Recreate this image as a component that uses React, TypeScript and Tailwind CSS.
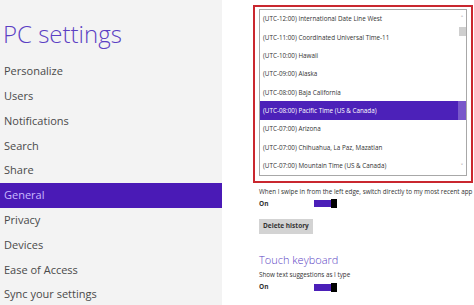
import React from 'react';

const navItems = [
    'Personalize',
    'Users',
    'Notifications',
    'Search',
    'Share',
    'General',
    'Privacy',
    'Devices',
    'Ease of Access',
    'Sync your settings',
];

const zones = [
    '(UTC-12:00) International Date Line West',
    '(UTC-11:00) Coordinated Universal Time-11',
    '(UTC-10:00) Hawaii',
    '(UTC-09:00) Alaska',
    '(UTC-08:00) Baja California',
    '(UTC-08:00) Pacific Time (US & Canada)',
    '(UTC-07:00) Arizona',
    '(UTC-07:00) Chihuahua, La Paz, Mazatlan',
    '(UTC-07:00) Mountain Time (US & Canada)',
];

function Toggle() {
    return (
        <div className="flex items-center">
            <div className="w-[17px] h-[7px] bg-[#4b1fb8]" />
            <div className="w-[6px] h-[9px] bg-black" />
        </div>
    );
}

export default function App() {
    return (
        <div
            className="flex w-[474px] h-[305px] overflow-hidden bg-white"
            style={{ fontFamily: '"Open Sans", "Noto Sans", sans-serif' }}
        >
            {/* left nav */}
            <aside className="w-[222px] shrink-0 bg-[#f3f3f3]">
                <div className="h-[59px] pl-[3px] pt-[19px]">
                    <h1 className="text-[24px] leading-[30px] font-light text-[#5b3fc4]">PC settings</h1>
                </div>
                <ul>
                    {navItems.map((item) => (
                        <li
                            key={item}
                            className={
                                item === 'General'
                                    ? 'h-[24.8px] flex items-center pl-[4px] text-[11px] bg-[#4a1ab6] text-[#c9b9ff]'
                                    : 'h-[24.8px] flex items-center pl-[4px] text-[11px] text-[#4a4a4a]'
                            }
                        >
                            {item}
                        </li>
                    ))}
                </ul>
            </aside>

            {/* right pane */}
            <main className="flex-1 min-w-0 pl-[31px] pt-[5px] text-[#333]">
                <div className="w-[220px] border-2 border-[#c9272f] px-[4px] pt-[2px] pb-[5px]">
                    <div className="relative border border-[#a8a8a8] bg-white">
                        {zones.map((z, i) => (
                            <div
                                key={z}
                                className={
                                    i === 5
                                        ? 'h-[18.3px] flex items-center pl-[3px] text-[6.3px] whitespace-nowrap bg-[#4c21b9] text-white'
                                        : 'h-[18.3px] flex items-center pl-[3px] text-[6.3px] whitespace-nowrap'
                                }
                            >
                                {z}
                            </div>
                        ))}
                        {/* scrollbar */}
                        <div className="absolute top-0 right-0 bottom-0 w-[8px] bg-white/25 flex flex-col items-center">
                            <span className="text-[7px] leading-[8px] mt-[5px] text-[#555]">˄</span>
                            <div className="w-[7px] h-[9px] mt-[4px] bg-[#cfcfcf]" />
                            <div className="flex-1" />
                            <span className="text-[7px] leading-[8px] mb-[4px] text-[#555]">˅</span>
                        </div>
                    </div>
                </div>

                <div className="pl-[6px]">
                    <p className="mt-[4px] text-[6.3px] leading-[10px] whitespace-nowrap">
                        When I swipe in from the left edge, switch directly to my most recent app
                    </p>
                    <div className="mt-[1px] flex items-center h-[12px]">
                        <span className="w-[55px] text-[6.5px] font-bold">On</span>
                        <Toggle />
                    </div>

                    <button className="mt-[9px] h-[15px] px-[4px] bg-[#d3d3d3] text-[6.5px] font-bold text-[#333]">
                        Delete history
                    </button>

                    <h2 className="mt-[19px] text-[11px] leading-[14px] font-light text-[#5b3fc4]">Touch keyboard</h2>
                    <p className="mt-[3px] text-[6.3px] leading-[10px] whitespace-nowrap">Show text suggestions as I type</p>
                    <div className="mt-[1px] flex items-center h-[12px]">
                        <span className="w-[55px] text-[6.5px] font-bold">On</span>
                        <Toggle />
                    </div>
                </div>
            </main>
        </div>
    );
}
